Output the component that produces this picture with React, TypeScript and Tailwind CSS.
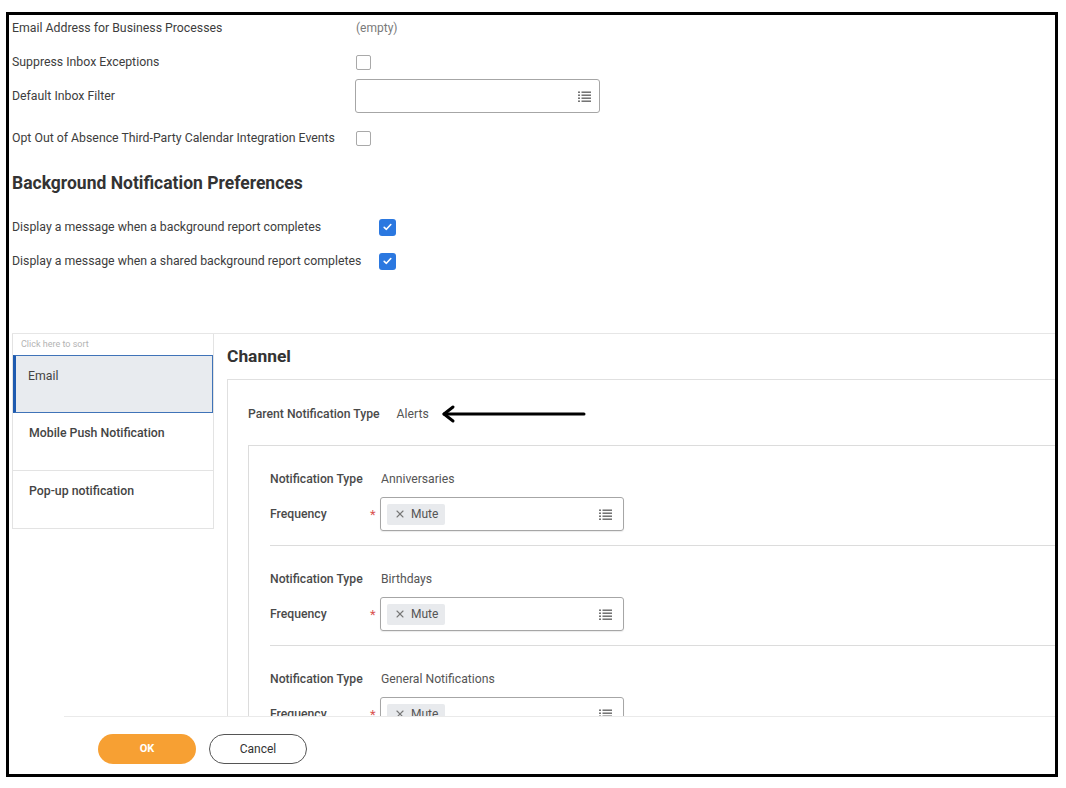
import { ReactNode } from 'react'

function ListIcon() {
  return (
    <svg width="13" height="11" viewBox="0 0 13 11" fill="#666">
      <rect x="0" y="0.5" width="2" height="1.4" />
      <rect x="3.5" y="0.5" width="9.5" height="1.4" />
      <rect x="0" y="3.5" width="2" height="1.4" />
      <rect x="3.5" y="3.5" width="9.5" height="1.4" />
      <rect x="0" y="6.5" width="2" height="1.4" />
      <rect x="3.5" y="6.5" width="9.5" height="1.4" />
      <rect x="0" y="9.5" width="2" height="1.4" />
      <rect x="3.5" y="9.5" width="9.5" height="1.4" />
    </svg>
  )
}

function EmptyBox() {
  return <div className="w-[15px] h-[15px] rounded-[2px] border border-[#a9a9a9] bg-white" />
}

function CheckedBox() {
  return (
    <div className="w-[17px] h-[17px] rounded-[3px] bg-[#2b78e0] flex items-center justify-center">
      <svg width="9" height="8" viewBox="0 0 9 8" fill="none" stroke="white" strokeWidth="1.6" strokeLinecap="round" strokeLinejoin="round">
        <polyline points="1.2,4.3 3.4,6.3 7.8,1.5" />
      </svg>
    </div>
  )
}

function Row({ label, children, h, mt, col = 344 }: { label: string; children?: ReactNode; h: number; mt: number; col?: number }) {
  return (
    <div className="flex items-center" style={{ height: h, marginTop: mt }}>
      <div className="text-[12.3px] text-[#3d3d3d] shrink-0" style={{ width: col }}>{label}</div>
      {children}
    </div>
  )
}

function NotifBlock({ type, last }: { type: string; last?: boolean }) {
  return (
    <div className={`pt-[25px] pb-[14px] ${last ? '' : 'border-b border-[#dcdcdc]'}`}>
      <div className="flex items-center h-[16px]">
        <div className="w-[111px] text-[12.2px] font-medium text-[#4a4a4a]">Notification Type</div>
        <div className="text-[12.2px] text-[#555]">{type}</div>
      </div>
      <div className="flex items-center h-[34px] mt-[10px]">
        <div className="w-[100px] text-[12.2px] font-medium text-[#4a4a4a]">Frequency</div>
        <div className="w-[10px] text-[#d9534f] text-[13px] leading-none">*</div>
        <div className="w-[244px] h-[34px] rounded-[3px] border border-[#a6a6a6] shadow-[0_1px_1px_rgba(0,0,0,0.08)] flex items-center pl-[6px] pr-[11px]">
          <div className="h-[21px] w-[58px] bg-[#e8eaed] rounded-[2px] flex items-center pl-[9px] text-[12px] text-[#555]">
            <svg className="mr-[7px]" width="8" height="8" viewBox="0 0 8 8" stroke="#777" strokeWidth="1.1" strokeLinecap="round">
              <line x1="1" y1="1" x2="7" y2="7" />
              <line x1="7" y1="1" x2="1" y2="7" />
            </svg>
            Mute
          </div>
          <div className="ml-auto"><ListIcon /></div>
        </div>
      </div>
    </div>
  )
}

export default function App() {
  return (
    <div className="w-[1066px] h-[788px] bg-white overflow-hidden pt-[12px] pl-[6px]" style={{ fontFamily: 'Roboto, "Liberation Sans", sans-serif' }}>
      <div className="w-[1052px] h-[765px] border-[3px] border-black flex flex-col overflow-hidden">
        <div className="h-[701px] overflow-hidden pl-[3px] pt-[1px]">
          <Row label="Email Address for Business Processes" h={24} mt={0}>
            <span className="text-[12px] text-[#7a7a7a]">(empty)</span>
          </Row>
          <Row label="Suppress Inbox Exceptions" h={24} mt={10}>
            <EmptyBox />
          </Row>
          <Row label="Default Inbox Filter" h={34} mt={5} col={343}>
            <div className="w-[245px] h-[34px] rounded-[3px] border border-[#a6a6a6] flex items-center justify-end pr-[8px]">
              <ListIcon />
            </div>
          </Row>
          <Row label="Opt Out of Absence Third-Party Calendar Integration Events" h={24} mt={13}>
            <EmptyBox />
          </Row>
          <div className="h-[24px] mt-[21px] flex items-center text-[17.5px] font-bold text-[#333]">Background Notification Preferences</div>
          <Row label="Display a message when a background report completes" h={24} mt={20} col={367}>
            <CheckedBox />
          </Row>
          <Row label="Display a message when a shared background report completes" h={24} mt={10} col={367}>
            <CheckedBox />
          </Row>

          <div className="mt-[60px] flex border-t border-[#e6e6e6]">
            <div className="w-[202px] shrink-0 self-start border-x border-b border-[#e3e3e3]">
              <div className="h-[21px] flex items-center pl-[8px] text-[9px] text-[#b3b3b3]">Click here to sort</div>
              <div className="h-[58px] bg-[#e8ebef] border border-[#3f73b8] border-l-[3px] border-l-[#1f5bb0] pl-[12px] pt-[11px] text-[12.3px] text-[#444]">Email</div>
              <div className="h-[58px] border-b border-[#e3e3e3] pl-[16px] pt-[11px] text-[12.3px] font-medium text-[#444]">Mobile Push Notification</div>
              <div className="h-[57px] pl-[16px] pt-[11px] text-[12.3px] font-medium text-[#444]">Pop-up notification</div>
            </div>
            <div className="flex-1 pl-[13px]">
              <div className="h-[45px] pt-[11px] text-[17.4px] font-bold text-[#333] leading-[22px]">Channel</div>
              <div className="border border-[#e0e0e0] -mr-[10px] pl-[20px] pt-[27px] min-h-[400px]">
                <div className="flex items-center h-[14px]">
                  <span className="text-[12.2px] font-medium text-[#4a4a4a]">Parent Notification Type</span>
                  <span className="ml-[17px] text-[12.2px] text-[#555]">Alerts</span>
                  <svg className="ml-[12px]" width="146" height="20" viewBox="0 0 146 20" fill="none" stroke="black" strokeWidth="3" strokeLinecap="round" strokeLinejoin="round">
                    <line x1="3" y1="10" x2="143" y2="10" />
                    <polyline points="12,3 3,10 12,17" />
                  </svg>
                </div>
                <div className="mt-[24px] border border-[#dcdcdc] -mr-[10px] pl-[21px] min-h-[300px]">
                  <NotifBlock type="Anniversaries" />
                  <NotifBlock type="Birthdays" />
                  <NotifBlock type="General Notifications" last />
                </div>
              </div>
            </div>
          </div>
        </div>
        <div className="flex-1 ml-[55px] border-t border-[#eaeaea] bg-white flex items-start pt-[17px] pl-[34px] gap-[13px]">
          <button className="w-[98px] h-[30px] rounded-full bg-[#f7a033] text-white text-[11px] font-bold">OK</button>
          <button className="w-[98px] h-[30px] rounded-full border border-[#555] bg-white text-[#333] text-[12px]">Cancel</button>
        </div>
      </div>
    </div>
  )
}
